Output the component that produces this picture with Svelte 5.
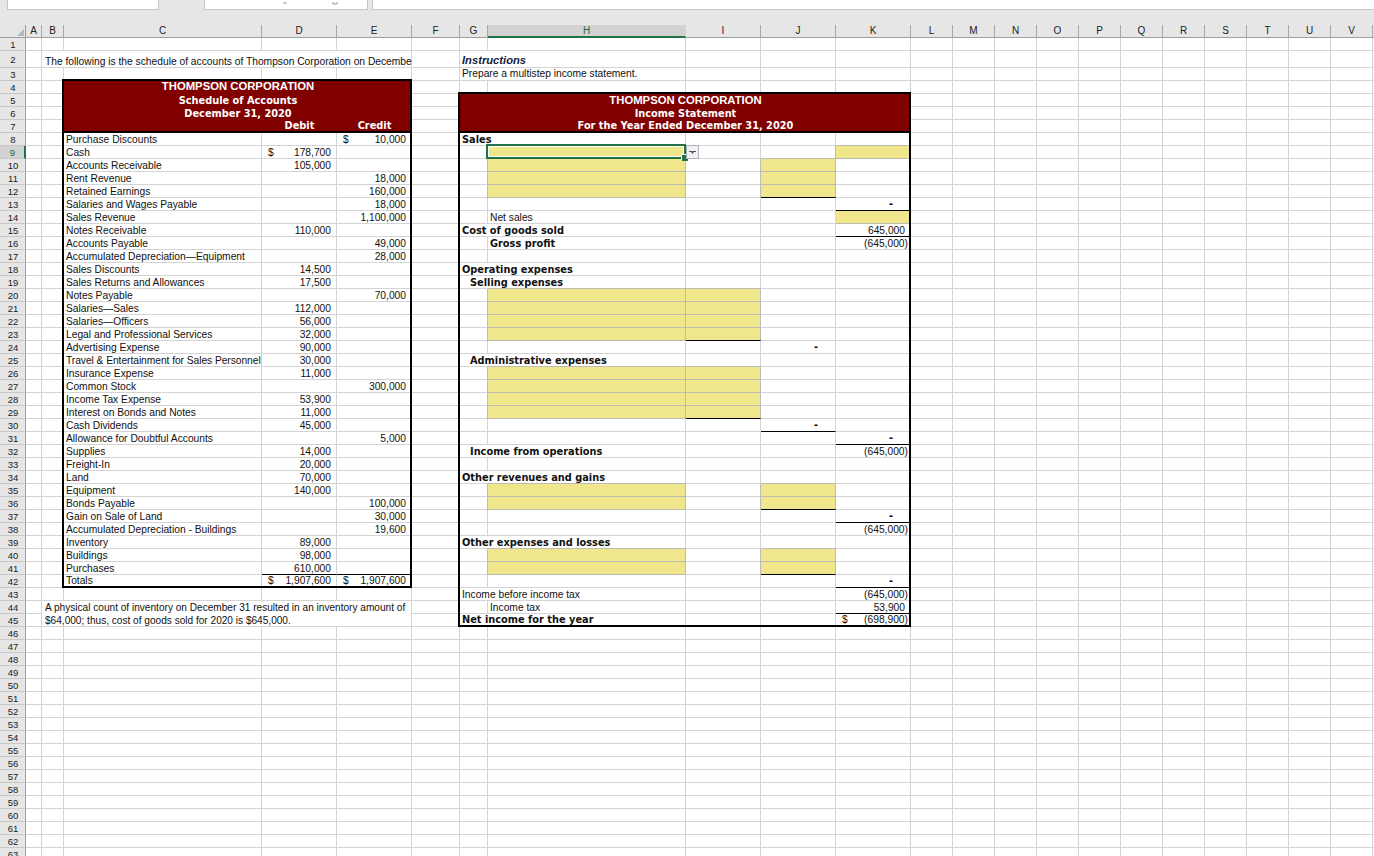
<script lang="ts">
  interface Cell {
    text?: string
    cls?: string
    colspan?: number
    rowspan?: number
    kind?: string
  }

  const letters = 'ABCDEFGHIJKLMNOPQRSTUVW'.split('')
  const rowCount = 63
  const cells = new Map<string, Cell>()

  function put(key: string, text: string, cls = '', colspan = 1, rowspan = 1, kind = '') {
    cells.set(key, { text, cls, colspan, rowspan, kind })
  }

  // Schedule of accounts: label, debit, credit
  const accounts: [string, string, string][] = [
    ['Purchase Discounts', '', '$10,000'],
    ['Cash', '$178,700', ''],
    ['Accounts Receivable', '105,000', ''],
    ['Rent Revenue', '', '18,000'],
    ['Retained Earnings', '', '160,000'],
    ['Salaries and Wages Payable', '', '18,000'],
    ['Sales Revenue', '', '1,100,000'],
    ['Notes Receivable', '110,000', ''],
    ['Accounts Payable', '', '49,000'],
    ['Accumulated Depreciation—Equipment', '', '28,000'],
    ['Sales Discounts', '14,500', ''],
    ['Sales Returns and Allowances', '17,500', ''],
    ['Notes Payable', '', '70,000'],
    ['Salaries—Sales', '112,000', ''],
    ['Salaries—Officers', '56,000', ''],
    ['Legal and Professional Services', '32,000', ''],
    ['Advertising Expense', '90,000', ''],
    ['Travel & Entertainment for Sales Personnel', '30,000', ''],
    ['Insurance Expense', '11,000', ''],
    ['Common Stock', '', '300,000'],
    ['Income Tax Expense', '53,900', ''],
    ['Interest on Bonds and Notes', '11,000', ''],
    ['Cash Dividends', '45,000', ''],
    ['Allowance for Doubtful Accounts', '', '5,000'],
    ['Supplies', '14,000', ''],
    ['Freight-In', '20,000', ''],
    ['Land', '70,000', ''],
    ['Equipment', '140,000', ''],
    ['Bonds Payable', '', '100,000'],
    ['Gain on Sale of Land', '', '30,000'],
    ['Accumulated Depreciation - Buildings', '', '19,600'],
    ['Inventory', '89,000', ''],
    ['Buildings', '98,000', ''],
    ['Purchases', '610,000', ''],
    ['Totals', '$1,907,600', '$1,907,600']
  ]

  accounts.forEach(([label, debit, credit], i) => {
    const row = 8 + i
    const last = row === 42 ? 'last ' : ''
    const under = row === 41 ? 'under ' : ''
    put(`C${row}`, label, last + (row === 25 ? 'tight' : ''))
    put(`D${row}`, debit, last + under + 'num', 1, 1, 'num')
    put(`E${row}`, credit, last + under + 'num', 1, 1, 'num')
  })

  put('B2', 'The following is the schedule of accounts of Thompson Corporation on December 31, 2020.', 'note', 4)
  put('B44', 'A physical count of inventory on December 31 resulted in an inventory amount of\n$64,000; thus, cost of goods sold for 2020 is $645,000.', 'note top', 4, 2)

  put('C4', 'THOMPSON CORPORATION', 'red center big raised', 3)
  put('C5', 'Schedule of Accounts', 'red center', 3)
  put('C6', 'December 31, 2020', 'red center', 3)
  put('C7', '', 'red foot')
  put('D7', 'Debit', 'red center foot')
  put('E7', 'Credit', 'red center foot')

  put('G2', 'Instructions', 'instructions raised', 2)
  put('G3', 'Prepare a multistep income statement.', 'last', 2)

  put('G5', 'THOMPSON CORPORATION', 'red center big last', 5)
  put('G6', 'Income Statement', 'red center', 5)
  put('G7', 'For the Year Ended December 31, 2020', 'red center foot', 5)

  // Income statement labels
  put('G8', 'Sales', 'bold', 2)
  put('H14', 'Net sales')
  put('G15', 'Cost of goods sold', 'bold', 2)
  put('H16', 'Gross profit', 'bold')
  put('G18', 'Operating expenses', 'bold', 2)
  put('G19', 'Selling expenses', 'bold indent', 2)
  put('G25', 'Administrative expenses', 'bold indent', 2)
  put('G32', 'Income from operations', 'bold indent', 2)
  put('G34', 'Other revenues and gains', 'bold', 2)
  put('G39', 'Other expenses and losses', 'bold', 2)
  put('G43', 'Income before income tax', '', 2)
  put('H44', 'Income tax')
  put('G45', 'Net income for the year', 'bold last', 2)

  // Answer cells
  const yellow = ['H9', 'K9', 'H10', 'J10', 'H11', 'J11', 'H12', 'J12', 'K14',
    'H35', 'J35', 'H36', 'J36', 'H40', 'J40', 'H41', 'J41']
  for (const row of [20, 21, 22, 23, 26, 27, 28, 29]) {
    yellow.push(`H${row}`, `I${row}`)
  }
  for (const key of yellow) put(key, '', 'yellow')

  // Statement amounts
  put('K13', '-', 'dash under')
  put('K15', '645,000', 'num under', 1, 1, 'num')
  put('K16', '(645,000)', 'num neg', 1, 1, 'num')
  put('J24', '-', 'dash')
  put('J30', '-', 'dash under')
  put('K31', '-', 'dash under')
  put('K32', '(645,000)', 'num neg', 1, 1, 'num')
  put('K37', '-', 'dash under')
  put('K38', '(645,000)', 'num neg', 1, 1, 'num')
  put('K42', '-', 'dash under')
  put('K43', '(645,000)', 'num neg', 1, 1, 'num')
  put('K44', '53,900', 'num under', 1, 1, 'num')
  put('K45', '$(698,900)', 'num neg last', 1, 1, 'num')

  for (const key of ['J12', 'I23', 'I29', 'J36', 'J41']) {
    cells.get(key)!.cls += ' under'
  }
  cells.get('H9')!.kind = 'selected'
  cells.get('K14')!.cls += ' no-top'

  // Flat list of grid items, skipping whatever a merged cell covers
  const covered = new Set<string>()
  const items: (Cell & { key: string; row: number; col: number })[] = []
  for (let row = 1; row <= rowCount; row++) {
    letters.forEach((letter, i) => {
      const key = `${letter}${row}`
      if (covered.has(key)) return
      const cell = cells.get(key) ?? {}
      const colspan = cell.colspan ?? 1
      const rowspan = cell.rowspan ?? 1
      for (let r = 0; r < rowspan; r++) {
        for (let c = 0; c < colspan; c++) {
          if (r || c) covered.add(`${letters[i + c]}${row + r}`)
        }
      }
      items.push({ ...cell, colspan, rowspan, key, row, col: i })
    })
  }
</script>

<div class="ribbon">
  <div class="box first"></div>
  <div class="box second">
    <svg width="60" height="3" viewBox="0 0 60 3">
      <path d="M0 1h4M50 0v2h4V0" fill="none" stroke="#9a9a9a" />
    </svg>
  </div>
  <div class="box third"></div>
</div>

<div class="sheet">
  <div class="corner"><span class="triangle"></span></div>

  {#each letters as letter, i}
    <div class="col-head" class:active={letter === 'H'} style="grid-area: 1 / {i + 2}">
      {letter === 'W' ? '' : letter}
    </div>
  {/each}

  {#each Array(rowCount) as _, r}
    <div class="row-head" class:active={r + 1 === 9} style="grid-area: {r + 2} / 1">{r + 1}</div>
  {/each}

  {#each items as cell (cell.key)}
    <div
      class="cell {cell.cls ?? ''}"
      class:selected={cell.kind === 'selected'}
      style="grid-area: {cell.row + 1} / {cell.col + 2} / span {cell.rowspan} / span {cell.colspan}"
    >
      {#if cell.kind === 'num' && cell.text?.startsWith('$')}
        <span class="dollar">$</span><span>{cell.text.slice(1)}</span>
      {:else if cell.kind === 'selected'}
        <span class="sel-frame"></span>
        <span class="sel-handle"></span>
        <span class="dropdown">
          <svg width="7" height="3" viewBox="0 0 7 3"><path d="M0 0h7v1H5L3.5 3 2 1H0z" fill="#555" /></svg>
        </span>
      {:else}
        {cell.text ?? ''}
      {/if}
    </div>
  {/each}

  <div class="frame frame-schedule"></div>
  <div class="frame frame-statement"></div>
</div>

<style>
  :global(body) {
    margin: 0;
    height: 856px;
    overflow: hidden;
    background: #fff;
  }

  .ribbon {
    display: flex;
    align-items: flex-start;
    height: 25px;
    padding-left: 7px;
    background: #e6e6e6;
  }

  .box {
    box-sizing: border-box;
    height: 10px;
    background: #fff;
    border: 1px solid #c6c6c6;
    border-top: none;
    overflow: hidden;
  }

  .first {
    width: 152px;
  }

  .second {
    width: 164px;
    margin-left: 45px;
    padding-left: 78px;
    line-height: 0;
  }

  .third {
    flex: 1;
    margin-left: 4px;
    border-right: none;
  }

  .sheet {
    display: grid;
    grid-template-columns: 26px 16px 22px 198px 75px 75px 48px 28px 198px 75px 75px 75px repeat(11, 42px) 10px;
    grid-template-rows: 13px 13px 17px repeat(61, 13px);
    height: 831px;
    overflow: hidden;
    font-family: "Liberation Sans", Arial, sans-serif;
    font-size: 10.25px;
    color: #111;
  }

  .corner {
    grid-area: 1 / 1;
    position: relative;
    background: #e6e6e6;
    border-bottom: 1px solid #9e9e9e;
    border-right: 1px solid #9e9e9e;
    box-sizing: border-box;
  }

  .triangle {
    position: absolute;
    right: 1px;
    bottom: 1px;
    border-style: solid;
    border-width: 0 0 7px 7px;
    border-color: transparent transparent #b7b7b7 transparent;
  }

  .col-head,
  .row-head {
    box-sizing: border-box;
    display: flex;
    align-items: center;
    justify-content: center;
    background: #e6e6e6;
    font-size: 10px;
    line-height: 12px;
    color: #222;
  }

  .col-head {
    border-right: 1px solid #a6a6a6;
    border-bottom: 1px solid #9e9e9e;
  }

  .row-head {
    padding: 1px 0 0 1px;
    font-size: 9.5px;
    border-right: 1px solid #9e9e9e;
    border-bottom: 1px solid #c8c8c8;
  }

  .col-head.active {
    background: #d2d2d2;
    color: #1d6b41;
    border-bottom: 2px solid #217346;
    border-right-color: #d2d2d2;
  }

  .row-head.active {
    background: #d2d2d2;
    color: #1d6b41;
    border-right: 2px solid #217346;
  }

  .cell {
    box-sizing: border-box;
    display: flex;
    align-items: flex-end;
    justify-content: flex-start;
    min-width: 0;
    padding: 0 0 0 2px;
    line-height: 10px;
    white-space: nowrap;
    overflow: clip;
    overflow-clip-margin: 1px;
    background: #fff;
    border-right: 1px solid #d4d4d4;
    border-bottom: 1px solid #d4d4d4;
  }

  .note {
    padding-left: 3px;
    white-space: pre;
  }

  .top {
    align-items: flex-start;
    font-size: 10.1px;
    line-height: 13px;
  }

  .tight {
    letter-spacing: -0.05px;
  }

  .bold {
    font-family: "DejaVu Sans", sans-serif;
    font-size: 9.8px;
    font-weight: 700;
  }

  .indent {
    padding-left: 10px;
  }

  .instructions {
    font-weight: 700;
    font-style: italic;
    color: #16203a;
    font-size: 11.2px;
  }

  .red {
    justify-content: center;
    padding: 0;
    background: #800000;
    color: #fff;
    border: none;
    font-family: "DejaVu Sans", sans-serif;
    font-size: 9.8px;
    font-weight: 700;
    line-height: 12px;
  }

  .big {
    font-family: "Liberation Sans", Arial, sans-serif;
    font-size: 11.3px;
  }

  .foot {
    padding-bottom: 1px;
    box-shadow: inset 0 -2px 0 #000;
  }

  .num {
    justify-content: flex-end;
    padding-right: 5px;
    padding-left: 6px;
  }

  .neg {
    padding-right: 2px;
  }

  .dollar {
    margin-right: auto;
  }

  .dash {
    justify-content: flex-end;
    padding-right: 17px;
    font-size: 12px;
    font-weight: 700;
    line-height: 12px;
  }

  .last {
    padding-bottom: 1px;
  }

  .raised {
    padding-bottom: 2px;
  }

  .under {
    border-bottom-color: #000;
  }

  .yellow {
    background: #f0e68c;
    border-right-color: #bcbcb4;
    border-bottom-color: #bcbcb4;
    box-shadow: 0 -1px 0 #bcbcb4, -1px 0 0 #bcbcb4;
  }

  .yellow.under {
    border-bottom-color: #000;
  }

  .yellow.no-top {
    box-shadow: none;
  }

  .selected {
    position: relative;
    overflow: visible;
    z-index: 2;
  }

  .sel-frame {
    position: absolute;
    inset: -2px -1px -1px -2px;
    border: 2px solid #217346;
    box-shadow: inset 0 0 0 1px #fff;
  }

  .sel-handle {
    position: absolute;
    left: 194px;
    top: 9px;
    width: 6px;
    height: 6px;
    background: #217346;
    box-shadow: -1px -1px 0 #fff;
  }

  .dropdown {
    box-sizing: border-box;
    position: absolute;
    left: 198px;
    top: -1px;
    width: 13px;
    height: 14px;
    display: flex;
    align-items: center;
    justify-content: center;
    background: #f1f1f1;
    border: 1px solid #abb1bb;
  }

  .frame {
    box-sizing: border-box;
    margin: -2px 0 0 -2px;
    border: 2px solid #000;
    pointer-events: none;
    z-index: 1;
  }

  .frame-schedule {
    grid-area: 5 / 4 / 44 / 7;
  }

  .frame-statement {
    grid-area: 6 / 8 / 47 / 13;
  }
</style>
